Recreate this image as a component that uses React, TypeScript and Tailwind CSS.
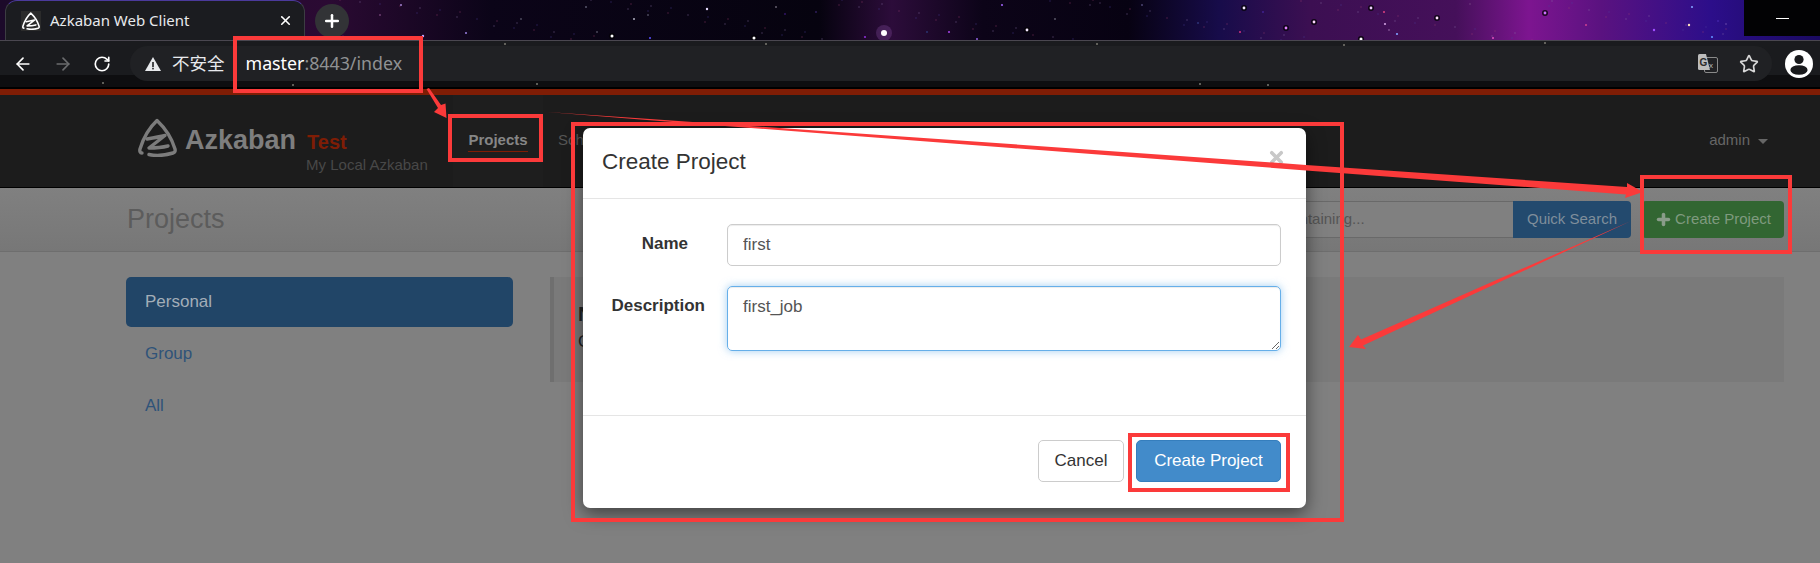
import React from "react";
import { ArrowLeft, ArrowRight, RotateCw, X, Plus, Star } from "lucide-react";

// x, y, radius, colour
const stars: [number, number, number, string][] = [
  [586, 7, 0.8, "#8f8fa8"], [707, 9, 1.2, "#e6dcff"], [776, 7, 0.8, "#a8a0b0"], [521, 19, 0.8, "#77778c"],
  [634, 19, 1, "#b0b0c0"], [648, 15, 0.8, "#77778c"], [597, 32, 0.8, "#77778c"], [612, 36, 1.5, "#ffffff"],
  [650, 38, 1, "#5a50ff"], [754, 38, 1.5, "#ffffff"], [865, 37, 1.1, "#8a30d0"], [949, 32, 1.1, "#a040e0"],
  [977, 39, 1, "#9060e0"], [1002, 5, 1.1, "#9a60f0"], [816, 12, 0.8, "#4a3090"], [785, 14, 0.8, "#5020a0"],
  [927, 32, 0.8, "#3050a0"], [1027, 30, 1.4, "#f4e8ff"], [1055, 19, 0.8, "#8f8fa0"], [1244, 8, 1.4, "#f4e8ff"],
  [1263, 12, 0.8, "#5030c0"], [1286, 28, 1.4, "#e080ff"], [1314, 22, 1.4, "#ffd8ff"], [1371, 8, 1.4, "#f0d0ff"],
  [1384, 12, 1, "#e04080"], [1385, 24, 1.1, "#d0a0e0"], [1397, 34, 1.1, "#80a0ff"], [1437, 18, 1.4, "#ffe0ff"],
  [1361, 39, 1.5, "#ffffff"], [1240, 32, 1, "#d03080"], [1198, 23, 0.8, "#4050a0"], [1493, 38, 1, "#e050c0"],
  [1389, 30, 0.8, "#a070b0"], [1545, 13, 1.4, "#d070ff"], [1692, 7, 1.1, "#80a0ff"], [1689, 25, 1.2, "#ffe0c0"],
  [1654, 30, 1.2, "#a050ff"], [1712, 37, 1.1, "#6090ff"], [1586, 25, 1, "#d04090"], [1718, 21, 0.8, "#5030c0"],
  [1726, 24, 0.8, "#7050b0"], [423, 36, 1.2, "#c0a0ff"], [466, 33, 1, "#9a80e0"], [401, 5, 1, "#a080d0"],
  [380, 15, 0.8, "#a060a0"], [1100, 3, 0.8, "#403050"], [1142, 5, 0.8, "#7a70b0"], [1470, 4, 0.8, "#704080"],
];

// faint background stars, spread out with a fixed step
const faintStars = Array.from({ length: 130 }, (_, i) => ({
  x: 340 + ((i * 211) % 1400),
  y: (i * 37) % 41,
  c: i % 3 === 0 ? "#a04070" : i % 3 === 1 ? "#5040a0" : "#8a70a8",
}));

const dimStars: [number, number][] = [
  [505, 44], [537, 84], [766, 44], [1344, 45], [1268, 85], [1200, 84], [103, 83], [1097, 44], [1545, 43], [293, 85],
];

function AzkabanLogo({ className }: { className: string }) {
  return (
    <svg viewBox="0 0 39 39" fill="none" stroke="currentColor" strokeWidth="3.4" strokeLinecap="round" strokeLinejoin="round" className={className}>
      <path d="M4 35 C2 35 1.5 33 2 31 C5 21 11 10 19 2.5 C27 10 34 21 37 31 C37.5 33 37 34.5 35 35 C25 38 17 38 11 36.5" />
      <path d="M9 21 C15 20 21 19 27 17.5 L11 30 C18 30 24 29.5 30 28" />
    </svg>
  );
}

function TranslateIcon() {
  return (
    <svg viewBox="0 0 20 20" className="w-[20px] h-[20px]">
      <rect x="6.5" y="3.5" width="13" height="15" rx="1.5" fill="#202124" stroke="#8a8a8a" />
      <path d="M0 1.5 Q0 0 1.5 0 H8 L12 16 H1.5 Q0 16 0 14.5 Z" fill="#bdbdbd" />
      <text x="1.5" y="11.5" fontSize="10" fontWeight="700" fill="#2a2a2a" fontFamily="Liberation Sans, sans-serif">G</text>
      <text x="11" y="14" fontSize="8" fill="#bdbdbd" fontFamily="Liberation Sans, sans-serif">x</text>
    </svg>
  );
}

function BrowserChrome() {
  return (
    <div className="font-['Noto_Sans',sans-serif]">
      {/* Tab strip */}
      <div className="relative h-[41px] pl-[5px] flex items-end overflow-hidden border-b border-[#4a4750] bg-[linear-gradient(90deg,#1c0a2a_0%,#2b0a33_18%,#0b0418_27%,#06030f_45%,#2c0c3a_49%,#0c0418_54%,#070212_62%,#170c4a_67%,#3c0f52_72%,#45105a_80%,#7d1590_84%,#5a1280_88%,#2c0e8a_94%,#1a0a60_100%)]">
        <svg className="absolute left-0 top-0 w-[1820px] h-[41px]" viewBox="0 0 1820 41">
          <circle cx="884" cy="33" r="8" fill="#a060c0" opacity="0.25" />
          {faintStars.map((s) => (
            <circle key={`${s.x}-${s.y}`} cx={s.x} cy={s.y} r="0.8" fill={s.c} opacity="0.45" />
          ))}
          {stars.map(([x, y, r, c]) => (
            <g key={`${x}-${y}`}>
              {r > 1.3 && <circle cx={x} cy={y} r={r + 1.6} fill="#050208" opacity="0.8" />}
              <circle cx={x} cy={y} r={r} fill={c} />
            </g>
          ))}
          <circle cx="884" cy="33" r="3" fill="#ffffff" />
        </svg>
        <div className="relative w-[300px] h-[40px] flex items-center pl-[15px] pr-[11px] rounded-t-[12px] border-x border-t border-x-[#3c3d42] border-t-[#4b3a9c] bg-[#1b1c20]">
          <div className="w-[20px] h-[20px] flex items-center justify-center bg-[#2b2b2b]">
            <AzkabanLogo className="w-[18px] h-[18px] text-white" />
          </div>
          <span className="ml-[9px] text-[15px] text-[#e8eaed]">Azkaban Web Client</span>
          <X className="ml-auto w-[15px] h-[15px] text-white" strokeWidth={2.6} />
        </div>
        <div className="relative ml-[10px] mb-[2px] w-[34px] h-[34px] rounded-full bg-[#323336] flex items-center justify-center">
          <Plus className="w-[20px] h-[20px] text-white" strokeWidth={3} />
        </div>
        <div className="absolute right-0 top-0 w-[76px] h-[36px] bg-[#020204] flex items-center justify-center">
          <div className="w-[13px] h-[1px] bg-white" />
        </div>
      </div>

      {/* Toolbar */}
      <div className="relative h-[46px] flex items-start pt-[5px] bg-[linear-gradient(#1a1b1e_0,#1a1b1e_34px,#0e0e10_34px)]">
        <svg className="absolute left-0 top-[-41px] w-[1820px] h-[87px]" viewBox="0 0 1820 87">
          {dimStars.map(([x, y]) => (
            <circle key={`${x}-${y}`} cx={x} cy={y} r="1" fill="#7a7a70" />
          ))}
        </svg>
        <div className="relative flex items-center w-[130px] h-[35px] pl-[13px]">
          <ArrowLeft className="w-[20px] h-[20px] text-white" strokeWidth={2} />
          <ArrowRight className="ml-[20px] w-[20px] h-[20px] text-[#6b6c6e]" strokeWidth={2} />
          <RotateCw className="ml-[20px] w-[18px] h-[18px] text-white" strokeWidth={2.2} />
        </div>
        <div className="relative w-[1642px] h-[35px] flex items-center pl-[15px] pr-[13px] rounded-full bg-[#202124]">
          <svg viewBox="0 0 16 16" className="w-[16px] h-[16px]">
            <path d="M8 1 L16 15 H0 Z" fill="#e8eaed" />
            <rect x="7.2" y="6" width="1.6" height="5" fill="#202124" />
            <rect x="7.2" y="11.8" width="1.6" height="1.6" fill="#202124" />
          </svg>
          <span className="ml-[11px] text-[17.5px] text-[#e8eaed] font-['Noto_Sans_CJK_SC',sans-serif]">不安全</span>
          <span className="ml-[21px] text-[17.8px] leading-none text-white">
            master<span className="text-[#8f9193]">:8443/index</span>
          </span>
          <div className="ml-auto flex items-center">
            <TranslateIcon />
            <Star className="ml-[21px] w-[20px] h-[20px] text-[#d8d8d8]" strokeWidth={2} />
          </div>
        </div>
        <svg viewBox="0 0 28 28" className="relative ml-[13px] mt-[4px] w-[28px] h-[28px]">
          <circle cx="14" cy="14" r="14" fill="#ffffff" />
          <circle cx="14" cy="9.5" r="4.6" fill="#18191b" />
          <ellipse cx="14" cy="20" rx="8.6" ry="4.8" fill="#18191b" />
        </svg>
      </div>
      <div className="h-[2px] bg-black" />
      <div className="h-[6px] bg-[#7f1d05]" />
    </div>
  );
}

function Navbar() {
  return (
    <div className="h-[93px] flex items-stretch pl-[138px] pr-[52px] bg-[#1c1c1c] border-b border-black">
      <div className="w-[315px] flex items-start">
        <AzkabanLogo className="mt-[23px] w-[39px] h-[39px] text-[#7c7c7c]" />
        <span className="ml-[8px] mt-[29px] text-[27px] leading-[32px] font-bold text-[#7e7e7e]">Azkaban</span>
        <div className="ml-[11px] mt-[36px] flex flex-col">
          <span className="text-[20px] leading-[23px] font-bold text-[#7f1d05]">Test</span>
          <span className="text-[15px] leading-[18px] mt-[2px] -ml-[1px] whitespace-nowrap text-[#484848]">My Local Azkaban</span>
        </div>
      </div>
      <div className="w-[90px] flex justify-center bg-[#1e1e1e]">
        <span className="mt-[36px] h-[21px] text-[15px] leading-[18px] font-bold text-[#868686] border-b border-[#7f1d05]">Projects</span>
      </div>
      <span className="ml-[15px] mt-[36px] text-[15px] leading-[18px] text-[#555555]">Schedule</span>
      <div className="ml-auto mt-[36px] flex items-start text-[15px] leading-[18px] text-[#666666]">
        admin
        <div className="ml-[8px] mt-[8px] w-0 h-0 border-x-[5px] border-x-transparent border-t-[5px] border-t-[#666666]" />
      </div>
    </div>
  );
}

function PageHeader() {
  return (
    <div className="h-[64px] flex items-center pl-[127px] pr-[36px] border-b border-[#6e6e6e] bg-[linear-gradient(#808080,#777777)]">
      <h1 className="text-[27px] leading-[32px] -mt-[2px] text-[#5c5c5c]">Projects</h1>
      <div className="ml-auto flex h-[37px]">
        <input
          readOnly
          placeholder="Search containing..."
          className="w-[295px] px-[14px] text-[15px] bg-[#808080] border-y border-[#696969] outline-none placeholder:text-[#555555]"
        />
        <div className="w-[118px] flex items-center justify-center text-[15px] rounded-r-[4px] bg-[#234a6e] text-[#7f8e9b]">
          Quick Search
        </div>
        <div className="ml-[11px] w-[142px] flex items-center justify-center text-[15px] rounded-[4px] bg-[#326632] text-[#7f9a7f]">
          <Plus className="mr-[3px] w-[17px] h-[17px] text-[#8a9c8a]" strokeWidth={5} />
          Create Project
        </div>
      </div>
    </div>
  );
}

function Content() {
  return (
    <div className="flex pt-[25px] pl-[126px]">
      <div className="w-[387px] flex flex-col text-[17px] leading-[20px] text-[#2f5379]">
        <div className="h-[50px] flex items-center pl-[19px] rounded-[5px] bg-[#214567] text-[#a3aeb8]">Personal</div>
        <div className="mt-[1px] h-[52px] flex items-center pl-[19px]">Group</div>
        <div className="h-[52px] flex items-center pl-[19px]">All</div>
      </div>
      <div className="ml-[37px] w-[1234px] h-[105px] pl-[24px] pt-[25px] border-l-[4px] border-[#6f6f6f] bg-[#7a7a7a] text-[#222222]">
        <div className="w-fit text-[20px] leading-[24px] font-bold">No Projects</div>
        <div className="w-fit mt-[6px] text-[17px] leading-[20px]">Create a project.</div>
      </div>
    </div>
  );
}

function CreateProjectModal() {
  return (
    <div className="absolute left-[583px] top-[128px] w-[723px] h-[380px] flex flex-col rounded-[7px] bg-white text-[#333333] shadow-[0_6px_18px_rgba(0,0,0,0.5)]">
      <div className="h-[71px] flex items-start pl-[19px] pr-[20px] pt-[19px] border-b border-[#e5e5e5]">
        <h2 className="text-[22.5px] leading-[30px]">Create Project</h2>
        <X className="ml-auto mt-[1px] w-[19px] h-[19px] text-[#c8c8c8]" strokeWidth={4.5} />
      </div>
      <div className="flex-1 pt-[25px] pr-[25px] text-[17px] leading-[20px]">
        <div className="flex items-start">
          <label className="w-[105px] mr-[17px] pt-[10px] text-right font-bold">Name</label>
          <input
            readOnly
            value="first"
            className="ml-[22px] flex-1 h-[42px] px-[15px] rounded-[5px] border border-[#cccccc] text-[#555555] outline-none shadow-[inset_0_1px_1px_rgba(0,0,0,0.075)]"
          />
        </div>
        <div className="mt-[20px] flex items-start">
          <label className="w-[122px] pt-[10px] text-right font-bold">Description</label>
          <textarea
            readOnly
            value="first_job"
            className="ml-[22px] flex-1 h-[65px] px-[15px] py-[10px] rounded-[5px] border border-[#66afe9] text-[#555555] outline-none shadow-[inset_0_1px_1px_rgba(0,0,0,0.075),0_0_8px_rgba(102,175,233,0.6)]"
          />
        </div>
      </div>
      <div className="h-[93px] flex justify-end items-start pt-[24px] pr-[25px] border-t border-[#e5e5e5] text-[17px]">
        <button className="w-[86px] h-[42px] rounded-[5px] border border-[#cccccc] bg-white">Cancel</button>
        <button className="ml-[12px] w-[145px] h-[42px] rounded-[5px] border border-[#357ebd] bg-[#428bca] text-white">Create Project</button>
      </div>
    </div>
  );
}

function Annotations() {
  return (
    <>
      <div className="absolute left-[233px] top-[36px] w-[190px] h-[57px] border-[4px] border-[#fb3a3a]" />
      <div className="absolute left-[448px] top-[114px] w-[95px] h-[48px] border-[4px] border-[#fb3a3a]" />
      <div className="absolute left-[571px] top-[122px] w-[773px] h-[400px] border-[4px] border-[#fb3a3a]" />
      <div className="absolute left-[1640px] top-[175px] w-[152px] h-[79px] border-[4px] border-[#fb3a3a]" />
      <div className="absolute left-[1128px] top-[433px] w-[162px] h-[59px] border-[4px] border-[#fb3a3a]" />
      <svg className="absolute left-0 top-0 w-[1820px] h-[563px] pointer-events-none" viewBox="0 0 1820 563">
        <path d="M426.5 89 L429 88 L441 105 L445.5 103.5 L446.5 118 L434 112 L438 108 Z" fill="#fb3a3a" />
        <path d="M547 112 L650 119 L920 137.7 L1306 164.9 L1627 187 L1627 183 L1643 192 L1625 198 L1626 194.5 L1306 170.4 L920 140.9 L650 120.2 Z" fill="#fb3a3a" />
        <path d="M1631 221 L1363 345.5 L1366 349 L1349 347 L1358 335 L1361 339.5 Z" fill="#fb3a3a" />
      </svg>
    </>
  );
}

export default function App() {
  return (
    <div className="relative w-[1820px] h-[563px] overflow-hidden bg-[#808080] font-['Liberation_Sans',sans-serif]">
      <BrowserChrome />
      <Navbar />
      <PageHeader />
      <Content />
      <CreateProjectModal />
      <Annotations />
    </div>
  );
}
